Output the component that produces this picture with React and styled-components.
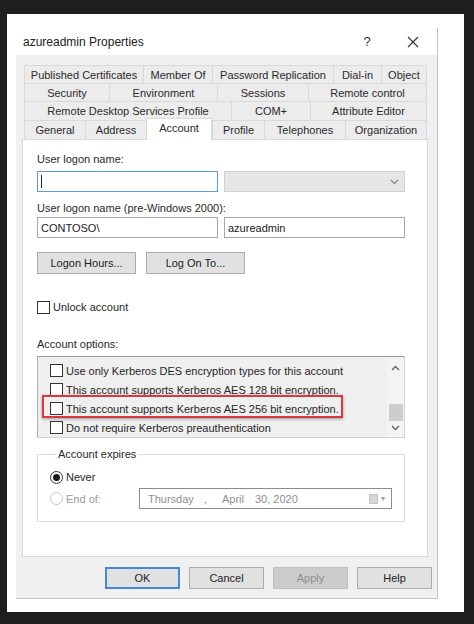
import styled, { createGlobalStyle } from "styled-components";

const GlobalStyle = createGlobalStyle`
  html, body {
    margin: 0;
    padding: 0;
    background: #1e1e1e;
  }
  body {
    font-family: "Liberation Sans", Arial, sans-serif;
    font-size: 11px;
    color: #262626;
  }
  * { box-sizing: border-box; }
`;

const tabRows = [
    { h: 18, tabs: [["Published Certificates", 119], ["Member Of", 69], ["Password Replication", 121], ["Dial-in", 48], ["Object", 46]] },
    { h: 18, tabs: [["Security", 85], ["Environment", 108], ["Sessions", 91], ["Remote control", 119]] },
    { h: 19, tabs: [["Remote Desktop Services Profile", 207], ["COM+", 79], ["Attribute Editor", 117]] },
    { h: 19, tabs: [["General", 61], ["Address", 61], ["Account", 66, true], ["Profile", 52], ["Telephones", 81], ["Organization", 82]] },
];

const options = [
    "Use only Kerberos DES encryption types for this account",
    "This account supports Kerberos AES 128 bit encryption.",
    "This account supports Kerberos AES 256 bit encryption.",
    "Do not require Kerberos preauthentication",
];

const Chevron = ({ up, color = "#666" }) => (
    <svg width="9" height="6" viewBox="0 0 9 6">
        <path d={up ? "M1 5 L4.5 1.5 L8 5" : "M1 1 L4.5 4.5 L8 1"} fill="none" stroke={color} strokeWidth="1.3" />
    </svg>
);

const CloseIcon = () => (
    <svg width="12" height="12" viewBox="0 0 12 12">
        <path d="M1 1 L11 11 M11 1 L1 11" stroke="#333" strokeWidth="1.1" />
    </svg>
);

const App = () => {
    return (
        <>
            <GlobalStyle />
            <Backdrop>
                <Card>
                    <Dialog>
                        <TitleBar>
                            <Title>azureadmin Properties</Title>
                            <TitleButton $size={13}>?</TitleButton>
                            <TitleButton><CloseIcon /></TitleButton>
                        </TitleBar>
                        <Body>
                            <Tabs>
                                {tabRows.map((row, i) => (
                                    <TabRow key={i} $h={row.h}>
                                        {row.tabs.map(([label, w, active], j) => (
                                            <Tab key={label} $w={w} $active={active} $last={j === row.tabs.length - 1}>
                                                {label}
                                            </Tab>
                                        ))}
                                    </TabRow>
                                ))}
                            </Tabs>
                            <Panel>
                                <Label $mt={13}>User logon name:</Label>
                                <FieldRow $mt={5}>
                                    <TextBox $focused><Caret /></TextBox>
                                    <Combo><Chevron color="#8a8a8a" /></Combo>
                                </FieldRow>
                                <Label $mt={10}>User logon name (pre-Windows 2000):</Label>
                                <FieldRow $mt={2}>
                                    <TextBox>CONTOSO\</TextBox>
                                    <TextBox>azureadmin</TextBox>
                                </FieldRow>
                                <ButtonRow>
                                    <Button $w={99}>Logon Hours...</Button>
                                    <Button $w={99}>Log On To...</Button>
                                </ButtonRow>
                                <CheckRow>
                                    <CheckBox />
                                    <span>Unlock account</span>
                                </CheckRow>
                                <Label $mt={24}>Account options:</Label>
                                <ListBox>
                                    <ListItems>
                                        {options.map((o) => (
                                            <ListItem key={o}>
                                                <CheckBox />
                                                <span>{o}</span>
                                            </ListItem>
                                        ))}
                                    </ListItems>
                                    <ScrollBar>
                                        <Chevron up color="#606060" />
                                        <Thumb />
                                        <Chevron color="#606060" />
                                    </ScrollBar>
                                    <Highlight />
                                </ListBox>
                                <Group>
                                    <Legend>Account expires</Legend>
                                    <RadioRow $mt={7} $h={18}>
                                        <Radio $checked />
                                        <span>Never</span>
                                    </RadioRow>
                                    <RadioRow $mt={2} $h={21} $disabled>
                                        <Radio $disabled />
                                        <span>End of:</span>
                                        <DatePicker>
                                            <DatePart>Thursday</DatePart>
                                            <DatePart $ml={10}>,</DatePart>
                                            <DatePart $ml={15}>April</DatePart>
                                            <DatePart $ml={11}>30, 2020</DatePart>
                                            <CalendarIcon />
                                            <DropArrow>▾</DropArrow>
                                        </DatePicker>
                                    </RadioRow>
                                </Group>
                            </Panel>
                            <Footer>
                                <Button $w={75} $default>OK</Button>
                                <Button $w={75}>Cancel</Button>
                                <Button $w={75} $disabled>Apply</Button>
                                <Button $w={75}>Help</Button>
                            </Footer>
                        </Body>
                    </Dialog>
                </Card>
            </Backdrop>
        </>
    );
};

const Backdrop = styled.div`
    width: 474px;
    height: 624px;
    padding: 14px 10px 12px 7px;
    background: #1e1e1e;
`;

const Card = styled.div`
    width: 457px;
    height: 598px;
    background: #ffffff;
    padding: 14px 0 0 9px;
`;

const Dialog = styled.div`
    width: 422px;
    height: 571px;
    border-right: 1px solid #c4c4c4;
    border-bottom: 1px solid #c4c4c4;
    display: flex;
    flex-direction: column;
`;

const TitleBar = styled.div`
    height: 27px;
    display: flex;
    align-items: center;
    padding: 0 9px 0 7px;
    background: #ffffff;
    gap: 16px;
`;

const Title = styled.div`
    font-size: 12px;
    color: #222;
    margin-right: auto;
`;

const TitleButton = styled.div`
    width: 30px;
    display: flex;
    justify-content: center;
    align-items: center;
    font-size: ${(p) => p.$size || 12}px;
    color: #333;
`;

const Body = styled.div`
    flex: 1;
    background: #f0f0f0;
    padding: 10px 7px 0 6px;
    display: flex;
    flex-direction: column;
`;

const Tabs = styled.div`
    margin: 0 2px;
    width: 403px;
    display: flex;
    flex-direction: column;
`;

const TabRow = styled.div`
    height: ${(p) => p.$h}px;
    display: flex;
    align-items: flex-end;
`;

const Tab = styled.div`
    width: ${(p) => p.$w}px;
    height: ${(p) => (p.$active ? 22 : "100%")};
    ${(p) => p.$active && "height: 22px; margin-bottom: -1px;"}
    display: flex;
    align-items: center;
    justify-content: center;
    white-space: nowrap;
    color: #2a2a2a;
    background: ${(p) => (p.$active ? "#ffffff" : "#ececec")};
    border-top: 1px solid #d9d9d9;
    border-left: 1px solid #d9d9d9;
    border-right: ${(p) => (p.$last || p.$active ? "1px solid #d9d9d9" : "none")};
    position: relative;
    z-index: ${(p) => (p.$active ? 2 : 0)};
    padding-bottom: ${(p) => (p.$active ? 3 : 0)}px;
`;

const Panel = styled.div`
    width: 406px;
    height: 418px;
    background: #ffffff;
    border: 1px solid #d9d9d9;
    padding: 0 22px 0 14px;
    display: flex;
    flex-direction: column;
`;

const Label = styled.div`
    margin-top: ${(p) => p.$mt}px;
    height: 13px;
    line-height: 13px;
    color: #2a2a2a;
`;

const FieldRow = styled.div`
    margin-top: ${(p) => p.$mt}px;
    display: flex;
    gap: 6px;
`;

const TextBox = styled.div`
    width: 181px;
    height: 21px;
    border: 1px solid ${(p) => (p.$focused ? "#5a9be0" : "#a6a6a6")};
    background: #ffffff;
    padding: 0 3px;
    display: flex;
    align-items: center;
    color: #222;
`;

const Caret = styled.span`
    width: 1px;
    height: 13px;
    background: #222;
`;

const Combo = styled.div`
    width: 181px;
    height: 21px;
    border: 1px solid #cfcfcf;
    background: #e6e6e6;
    display: flex;
    align-items: center;
    justify-content: flex-end;
    padding-right: 5px;
`;

const ButtonRow = styled.div`
    margin-top: 14px;
    display: flex;
    gap: 10px;
`;

const Button = styled.div`
    width: ${(p) => p.$w}px;
    height: 22px;
    display: flex;
    align-items: center;
    justify-content: center;
    background: ${(p) => (p.$disabled ? "#cccccc" : "#e1e1e1")};
    border: ${(p) => (p.$default ? "2px solid #3f8bd8" : p.$disabled ? "1px solid #bfbfbf" : "1px solid #adadad")};
    color: ${(p) => (p.$disabled ? "#8e8e8e" : "#222")};
`;

const CheckRow = styled.div`
    margin-top: 26px;
    height: 14px;
    display: flex;
    align-items: center;
    gap: 3px;
`;

const CheckBox = styled.span`
    width: 13px;
    height: 13px;
    flex: none;
    border: 1px solid #333;
    background: #ffffff;
`;

const ListBox = styled.div`
    margin-top: 5px;
    height: 82px;
    position: relative;
    display: flex;
    background: #efefef;
    border: 1px solid #d4d4d4;
    border-top: 1px solid #9a9a9a;
    border-left: 1px solid #b0b0b0;
`;

const ListItems = styled.div`
    flex: 1;
    padding-top: 4px;
    display: flex;
    flex-direction: column;
`;

const ListItem = styled.div`
    height: 19px;
    padding-left: 12px;
    display: flex;
    align-items: center;
    gap: 3px;
    white-space: nowrap;
    color: #262626;
`;

const ScrollBar = styled.div`
    width: 17px;
    background: #f3f3f3;
    display: flex;
    flex-direction: column;
    align-items: center;
    padding: 8px 0 6px;
    justify-content: space-between;
`;

const Thumb = styled.div`
    width: 14px;
    height: 17px;
    background: #cdcdcd;
    margin-top: 28px;
`;

const Highlight = styled.div`
    position: absolute;
    left: 4px;
    top: 38px;
    width: 301px;
    height: 23px;
    border: 2px solid #d8383f;
    box-shadow: 0 1px 3px rgba(0, 0, 0, 0.35);
    pointer-events: none;
`;

const Group = styled.fieldset`
    margin: 10px 0 0;
    padding: 0 12px 12px 12px;
    border: 1px solid #dcdcdc;
    min-width: 0;
`;

const Legend = styled.legend`
    margin-left: 6px;
    padding: 0 2px;
    height: 13px;
    line-height: 13px;
    color: #2a2a2a;
`;

const RadioRow = styled.div`
    margin-top: ${(p) => p.$mt}px;
    height: ${(p) => p.$h}px;
    display: flex;
    align-items: center;
    gap: 3px;
    color: ${(p) => (p.$disabled ? "#9a9a9a" : "#262626")};
`;

const Radio = styled.span`
    width: 13px;
    height: 13px;
    flex: none;
    border-radius: 50%;
    border: 1px solid ${(p) => (p.$disabled ? "#c4c4c4" : "#333")};
    background: #ffffff;
    display: flex;
    align-items: center;
    justify-content: center;
    &::after {
        content: "";
        width: 7px;
        height: 7px;
        border-radius: 50%;
        background: ${(p) => (p.$checked ? "#1a1a1a" : "transparent")};
    }
`;

const DatePicker = styled.div`
    margin-left: auto;
    width: 253px;
    height: 21px;
    border: 1px solid #8c8c8c;
    background: #ffffff;
    display: flex;
    align-items: center;
    padding: 0 6px 0 8px;
    color: #8e8e8e;
`;

const DatePart = styled.span`
    margin-left: ${(p) => p.$ml || 0}px;
`;

const CalendarIcon = styled.span`
    margin-left: auto;
    width: 9px;
    height: 10px;
    background: #d6d6d6;
    border: 1px solid #c4c4c4;
`;

const DropArrow = styled.span`
    margin-left: 3px;
    font-size: 8px;
    color: #a0a0a0;
`;

const Footer = styled.div`
    margin-top: 10px;
    margin-right: -2px;
    display: flex;
    justify-content: flex-end;
    gap: 9px;
`;

export default App;
